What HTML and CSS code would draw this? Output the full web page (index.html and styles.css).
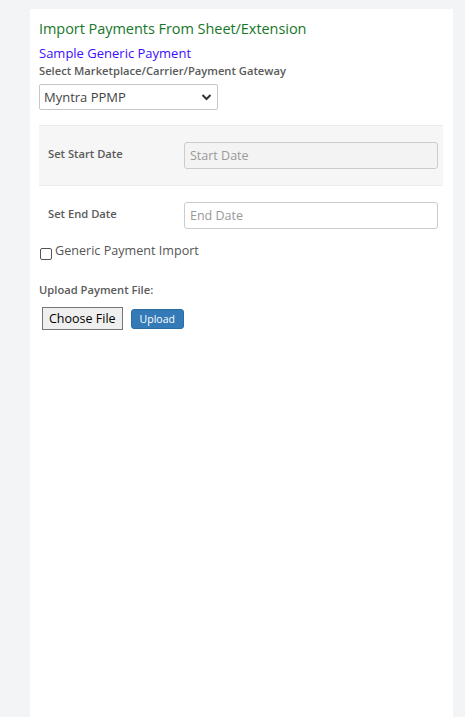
FILE: index.html
```html
<!DOCTYPE html>
<html>
<head>
<meta charset="utf-8">
<link rel="stylesheet" href="styles.css">
</head>
<body>
<div class="panel">
  <h3 class="title">Import Payments From Sheet/Extension</h3>
  <a class="sample" href="#">Sample Generic Payment</a>
  <div class="label">Select Marketplace/Carrier/Payment Gateway</div>
  <div class="select">
    <span>Myntra PPMP</span>
    <svg width="11" height="8" viewBox="0 0 11 8"><path d="M1.5 2 L5.5 6 L9.5 2" fill="none" stroke="#333" stroke-width="2"/></svg>
  </div>
  <div class="row shaded">
    <div class="rlabel">Set Start Date</div>
    <div class="input disabled">Start Date</div>
  </div>
  <div class="row">
    <div class="rlabel">Set End Date</div>
    <div class="input">End Date</div>
  </div>
  <label class="check"><span class="box"></span><span>Generic Payment Import</span></label>
  <div class="label upl">Upload Payment File:</div>
  <div class="actions">
    <span class="choose">Choose File</span>
    <span class="upload">Upload</span>
  </div>
</div>
</body>
</html>
```
FILE: styles.css
```css
html, body { margin: 0; padding: 0; }
body {
  background: #f3f4f6;
  font-family: "Open Sans", sans-serif;
  height: 717px;
  overflow: hidden;
}
.panel {
  background: #fff;
  margin: 9px 12px 0 30px;
  height: 708px;
  padding: 10px 10px 0 9px;
  box-sizing: border-box;
  display: flex;
  flex-direction: column;
  align-items: flex-start;
}
.title {
  margin: 0;
  font-size: 14.5px;
  font-weight: 500;
  color: #18772a;
  line-height: 20px;
  letter-spacing: -0.05px;
}
.sample {
  margin-top: 5px;
  font-size: 13px;
  color: #3c0dff;
  text-decoration: none;
  line-height: 18px;
}
.label {
  font-size: 11.2px;
  font-weight: 600;
  color: #5a5a5a;
  line-height: 17px;
}
.select {
  margin-top: 5px;
  width: 179px;
  height: 26px;
  box-sizing: border-box;
  border: 1px solid #c6c6c6;
  border-radius: 2px;
  display: flex;
  align-items: center;
  justify-content: space-between;
  padding: 0 5px 0 4px;
  font-size: 13px;
  color: #444;
}
.row {
  align-self: stretch;
  display: flex;
  align-items: center;
  height: 59px;
  padding-left: 9px;
  padding-right: 5px;
}
.shaded {
  margin-top: 15px;
  background: #f6f6f6;
  border-top: 1px solid #ececec;
  border-bottom: 1px solid #ececec;
}
.rlabel {
  width: 136px;
  font-size: 11.2px;
  font-weight: 600;
  color: #5a5a5a;
  margin-top: -4px;
}
.input {
  flex: 1;
  height: 27px;
  box-sizing: border-box;
  border: 1px solid #ccc;
  border-radius: 3px;
  padding-left: 5px;
  display: flex;
  align-items: center;
  font-size: 12.5px;
  color: #999;
  background: #fff;
}
.input.disabled { background: #f3f3f3; }
.check {
  margin-top: -3px;
  display: flex;
  align-items: flex-start;
  font-size: 12.6px;
  color: #555;
  gap: 3px;
}
.box {
  width: 10px;
  height: 10px;
  border: 1px solid #555;
  border-radius: 2px;
  margin-top: 6px;
  margin-left: 1px;
}
.upl { margin-top: 21px; }
.actions {
  margin-top: 9px;
  margin-left: 3px;
  display: flex;
  align-items: center;
  gap: 8px;
}
.choose {
  box-sizing: border-box;
  height: 23px;
  border: 1px solid #767676;
  background: #efefef;
  font-size: 12.5px;
  color: #000;
  padding: 0 6px;
  display: flex;
  align-items: center;
}
.upload {
  height: 20px;
  box-sizing: border-box;
  background: #337ab7;
  border: 1px solid #2e6da4;
  border-radius: 3px;
  color: #fff;
  font-size: 10.5px;
  padding: 0 8px;
  display: flex;
  align-items: center;
}
```
